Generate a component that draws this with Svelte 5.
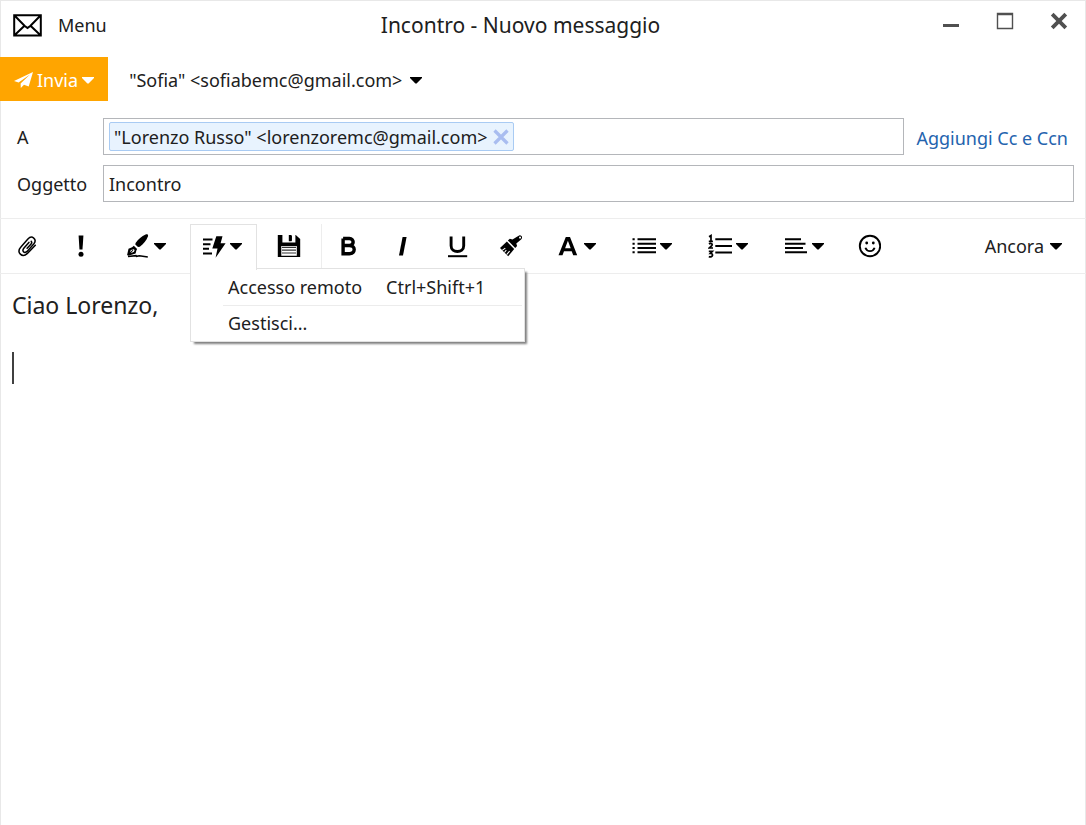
<script lang="ts">
  let subject = $state('Incontro');
  let menuOpen = $state(true);
  let chipShown = $state(true);
</script>

{#snippet caret()}
  <svg class="caret" viewBox="0 0 12 7" aria-hidden="true"><path d="M0 0h12v1L6.6 6.6h-1.2L0 1z" /></svg>
{/snippet}

<main class="window">
  <header class="titlebar">
    <button class="menu-button">
      <svg class="mail" viewBox="0 0 29 23" aria-hidden="true">
        <path d="M1.2 1.2h26.6v20.2H1.2zM1.5 1.5l10 10.2 3 2.3 3-2.3 10-10.2M1.5 21.2l10-9.5M27.5 21.2l-10-9.5" />
      </svg>
      <span>Menu</span>
    </button>
    <h1>Incontro - Nuovo messaggio</h1>
    <div class="controls">
      <button aria-label="Riduci a icona">
        <svg viewBox="0 0 18 18"><path d="M1 13.5h16" stroke-width="3" /></svg>
      </button>
      <button aria-label="Ingrandisci">
        <svg viewBox="0 0 18 18"><path d="M1.5 1.5h15v15h-15zM1 2.5h16" stroke-width="1.4" /></svg>
      </button>
      <button aria-label="Chiudi">
        <svg viewBox="0 0 18 18"><path d="M2.2 2.2l13.6 13.6M15.8 2.2L2.2 15.8" stroke-width="3.8" /></svg>
      </button>
    </div>
  </header>

  <div class="send-row">
    <button class="send">
      <svg class="plane" viewBox="0 0 19 16" aria-hidden="true">
        <path d="M19 0L0 9l4.6 1.6L16 2.5 6.6 11.4 6.8 16l3.2-3.2 4.7 1.7z" />
      </svg>
      <span>Invia</span>
      {@render caret()}
    </button>
    <button class="from">
      <span>"Sofia" &lt;sofiabemc@gmail.com&gt;</span>
      {@render caret()}
    </button>
  </div>

  <div class="fields">
    <div class="field">
      <label for="to">A</label>
      <div class="box">
        {#if chipShown}
          <span class="chip">
            <span>"Lorenzo Russo" &lt;lorenzoremc@gmail.com&gt;</span>
            <button aria-label="Rimuovi" onclick={() => (chipShown = false)}>
              <svg viewBox="0 0 16 16"><path d="M1.5 1.5l13 13M14.5 1.5l-13 13" /></svg>
            </button>
          </span>
        {/if}
        <input id="to" type="text" />
      </div>
      <a href="#cc">Aggiungi Cc e Ccn</a>
    </div>
    <div class="field">
      <label for="subject">Oggetto</label>
      <div class="box"><input id="subject" type="text" bind:value={subject} /></div>
    </div>
  </div>

  <div class="toolbar" role="toolbar">
    <button class="tool" aria-label="Allega">
      <svg class="icon" viewBox="0 0 24 24" fill="none" stroke="#000" stroke-width="1.5" stroke-linecap="round">
        <path d="M20.3 11.2l-7.9 8.2c-5.3 5.1-11.3-1-6.5-6.3l7-8.2c4.1-4.2 9.4.3 6 4.9l-6.8 7.6c-3 2.7-5.6-.5-3.1-3.4l4.9-5.6" />
        <path d="M16.2 7.2c1.1 1.2.6 2-.3 3l-3.8 4.1" />
      </svg>
    </button>
    <button class="tool" aria-label="Priorità alta">
      <svg class="icon" viewBox="0 0 24 24"><path d="M9.6 1.5h4.8l-.9 14h-3z" /><circle cx="12" cy="20.3" r="2.5" /></svg>
    </button>
    <button class="tool drop" aria-label="Firma">
      <svg class="icon" viewBox="0 0 24 24">
        <path d="M19.6.6c1.6-.8 3 .2 2.3 1.9-1.6 4.1-4.2 7.3-8.1 10.2l-1.8.3-2.7-2.6.3-1.5C12.3 5.4 15.6 2.4 19.6.6z" />
        <path fill-rule="evenodd" d="M7.8 11.8l3.3 3.3-.8 1.6-.7 2.9-7.3 2.2-1.2-.8 1.4-6.3 3.6-1.4zM3.8 18.6l3-2.9.5.6-2.5 2.9 3.2-1.4.6-1.8-.9-.8-2.8.9z" />
        <path d="M2 22.5l8-.9.6.8 2.8-.7 8.4 1.3" fill="none" stroke="#000" stroke-width="1.6" />
      </svg>
      {@render caret()}
    </button>

    <div class="quick">
      <button class="tab" aria-label="Testo rapido" aria-expanded={menuOpen} onclick={() => (menuOpen = !menuOpen)}>
        <svg class="icon" viewBox="0 0 24 24">
          <path d="M1 4.5h9.5M1 9.3h7.5M1 13.8h6M1 18.6h9" stroke="#000" stroke-width="2" />
          <path d="M14.3 1.2h6.2l-1.9 7h5L13.6 22.8l1.9-9.4h-5.2z" />
        </svg>
        {@render caret()}
      </button>
      {#if menuOpen}
        <div class="menu" role="menu">
          <button role="menuitem"><span>Accesso remoto</span><kbd>Ctrl+Shift+1</kbd></button>
          <button role="menuitem">Gestisci...</button>
        </div>
      {/if}
    </div>

    <button class="tool save" aria-label="Salva">
      <svg class="icon" viewBox="0 0 24 24">
        <path fill-rule="evenodd" d="M.8 1h18l4.4 4v18H.8zM5.4 1v7.5h13V1h-1.2v0h-2.7v6.3h-2.7V1zM4.3 12v9.7h15.5V12z" />
        <path d="M5 13.3h14M5 16.2h14M5 19h14" stroke="#333" stroke-width="1.2" />
        <path d="M12.2 1.8h2.7v5h-2.7z" />
      </svg>
    </button>

    <button class="tool" aria-label="Grassetto">
      <svg class="icon" viewBox="0 0 24 24" fill="none" stroke="#000" stroke-width="3.4">
        <path d="M6.1 4.5h6.3c5 0 5 7 0 7H6.1M12.4 11.5c6.4 0 6.4 8.2 0 8.2H6.1V4.5" />
      </svg>
    </button>
    <button class="tool" aria-label="Corsivo">
      <svg class="icon" viewBox="0 0 24 24"><path d="M11.6 3h4L12 21.5H8z" /></svg>
    </button>
    <button class="tool" aria-label="Sottolineato">
      <svg class="icon" viewBox="0 0 24 24" fill="none" stroke="#000">
        <path d="M6.1 2.5v9.2c0 7.8 12.6 7.8 12.6 0V2.5" stroke-width="2.9" /><path d="M3 22.2h19.2" stroke-width="2" />
      </svg>
    </button>
    <button class="tool" aria-label="Copia formato">
      <svg class="icon" viewBox="0 0 24 24">
        <path fill-rule="evenodd" d="M20.6 1.3c2.6-.1 3.2 2.8 1.5 4.1l-4.8 4.2.8 2.5-1.9 1.8-7.3-7.4 1.9-1.7 2.7.8 4.5-2.9zM21 2.6a1 1 0 1 0 .1 2 1 1 0 0 0-.1-2z" />
        <path d="M7.9 7.6l7.3 7.4-6 7.3L1 14.1z" />
        <path d="M3.2 16.4l3.1-2.3M5.4 18.5l1.9-2.4M7.6 20.6l3-3.5" stroke="#fff" stroke-width="1.1" />
      </svg>
    </button>
    <button class="tool drop" aria-label="Colore testo">
      <svg class="icon" viewBox="0 0 24 24"><path fill-rule="evenodd" d="M9.8 3h4.2l7.2 18.3h-4l-1.5-4H8l-1.5 4h-4zM11.9 6.8l-2.8 7.5h5.6z" /></svg>
      {@render caret()}
    </button>
    <button class="tool drop" aria-label="Elenco puntato">
      <svg class="icon" viewBox="0 0 24 24" stroke="#000" stroke-width="2">
        <path d="M5.5 5.3H24M5.5 9.7H24M5.5 14H24M5.5 18.3H24" /><path d="M.5 5.3h2.2M.5 9.7h2.2M.5 14h2.2M.5 18.3h2.2" />
      </svg>
      {@render caret()}
    </button>
    <button class="tool drop" aria-label="Elenco numerato">
      <svg class="icon" viewBox="0 0 24 24" fill="none" stroke="#000" stroke-width="2">
        <path d="M7.3 5.3H24M7.3 12H24M7.3 18.5H24" />
        <path d="M1 2.8l2-1.2v5.8M.8 7.4h4.1M1 10.2c1.8-1.6 4.2-.1 2.7 1.5L1.2 14H5M.8 17.3h3.6l-2 2.1c3.2-.1 2.8 4.5-1.6 3.2" stroke-width="1.7" />
      </svg>
      {@render caret()}
    </button>
    <button class="tool drop" aria-label="Allineamento">
      <svg class="icon" viewBox="0 0 24 24" stroke="#000" stroke-width="2">
        <path d="M1 5.3h16M1 9.7h20.5M1 14h18M1 18.3h22" />
      </svg>
      {@render caret()}
    </button>
    <button class="tool" aria-label="Emoticon">
      <svg class="icon" viewBox="0 0 24 24" fill="none" stroke="#000" stroke-width="1.9">
        <circle cx="13" cy="12" r="10.2" /><path d="M8.4 13.8c1.6 4.4 7.6 4.4 9.2 0" />
        <circle cx="9.7" cy="9" r="1.4" fill="#000" stroke="none" /><circle cx="16.3" cy="9" r="1.4" fill="#000" stroke="none" />
      </svg>
    </button>

    <button class="more"><span>Ancora</span>{@render caret()}</button>
  </div>

  <div class="editor" role="textbox" aria-multiline="true" aria-label="Messaggio" tabindex="0" contenteditable="true">
    <p>Ciao Lorenzo,</p>
    <p><span class="cursor"></span></p>
  </div>
</main>

<style>
  :global(body) {
    margin: 0;
    background: #fff;
  }
  * {
    box-sizing: border-box;
  }
  .window {
    display: flex;
    flex-direction: column;
    min-height: 100vh;
    border-top: 1px solid #e8e8e8;
    box-shadow: inset 1px 0 #e8e8e8, inset -1px 0 #e8e8e8;
    color: #202020;
    font-family: 'Noto Sans', 'Open Sans', sans-serif;
    font-size: 18px;
    line-height: 24px;
  }
  button,
  input {
    margin: 0;
    padding: 0;
    border: 0;
    background: none;
    color: inherit;
    font: inherit;
  }
  svg {
    display: block;
    flex: none;
  }
  .caret {
    width: 12px;
    height: 7px;
    fill: currentColor;
  }
  .titlebar {
    display: grid;
    grid-template-columns: 1fr auto 1fr;
    align-items: center;
    height: 56px;
    padding: 0 18px 8px 13px;
  }
  .menu-button {
    display: flex;
    align-items: center;
    gap: 16px;
    justify-self: start;
  }
  .mail {
    width: 29px;
    height: 23px;
    fill: none;
    stroke: #000;
    stroke-width: 2;
  }
  h1 {
    margin: 0;
    padding-right: 40px;
    font-size: 21px;
    font-weight: 400;
    line-height: 28px;
  }
  .controls {
    display: flex;
    gap: 36px;
    justify-self: end;
    padding-bottom: 8px;
  }
  .controls svg {
    width: 18px;
    height: 18px;
    fill: none;
    stroke: #505050;
  }
  .send-row {
    display: flex;
    height: 44px;
    gap: 21px;
  }
  .send,
  .from {
    display: flex;
    align-items: center;
    padding-top: 2px;
  }
  .send {
    gap: 4px;
    padding-right: 14px;
    padding-left: 14px;
    background: #ffa500;
    color: #fff;
  }
  .plane {
    width: 19px;
    height: 16px;
    fill: #fff;
  }
  .from {
    gap: 8px;
  }
  .from .caret,
  .toolbar .caret {
    color: #000;
  }
  .fields {
    display: flex;
    flex-direction: column;
    gap: 10px;
    padding: 17px 12px 16px 17px;
  }
  .field {
    display: flex;
    align-items: center;
  }
  label {
    flex: none;
    width: 86px;
  }
  .box {
    display: flex;
    flex: 1;
    align-items: center;
    min-width: 0;
    height: 37px;
    padding: 0 5px;
    border: 1px solid #b4b6ba;
  }
  .box input {
    flex: 1;
    min-width: 0;
    outline: 0;
  }
  .chip {
    display: flex;
    align-items: center;
    gap: 5px;
    height: 29px;
    padding: 0 4px;
    border: 1px solid #a9cbf3;
    border-radius: 2px;
    background: #e8f3fe;
    white-space: nowrap;
  }
  .chip svg {
    width: 16px;
    height: 16px;
    stroke: #a9bdf0;
    stroke-width: 3.2;
  }
  .field a {
    flex: none;
    padding: 2px 6px 0 12px;
    color: #2463ae;
    text-decoration: none;
  }
  .toolbar {
    display: flex;
    height: 56px;
    border-top: 1px solid #ededed;
    border-bottom: 1px solid #ededed;
  }
  .tool,
  .tab,
  .more {
    display: flex;
    flex: none;
    align-items: center;
    justify-content: center;
    gap: 4px;
  }
  .tool {
    width: 54px;
  }
  .drop {
    width: 76px;
  }
  .icon {
    width: 24px;
    height: 24px;
  }
  .quick {
    position: relative;
    display: flex;
    margin: 5px 0 0 6px;
  }
  .tab {
    position: relative;
    z-index: 2;
    width: 67px;
    height: 46px;
    padding: 0 3px 2px 0;
    border: 1px solid #e2e2e2;
    border-bottom: 0;
    background: #fff;
  }
  .menu {
    position: absolute;
    z-index: 1;
    top: 44px;
    left: 0;
    width: max-content;
    padding-right: 2px;
    border: 1px solid #e2e2e2;
    background: #fff;
    box-shadow: 3px 3px 2px -1px #808080;
  }
  .menu button {
    display: flex;
    gap: 24px;
    width: 100%;
    padding: 6px 37px 6px 37px;
    white-space: nowrap;
  }
  .menu button + button {
    background: linear-gradient(#ececec, #ececec) 32px 0 / 100% 1px no-repeat;
  }
  kbd {
    font: inherit;
  }
  .save {
    width: 65px;
    margin-top: 5px;
    padding-bottom: 5px;
    border-right: 1px solid #ededed;
  }
  .more {
    gap: 6px;
    margin-left: auto;
    padding-right: 24px;
  }
  .editor {
    flex: 1;
    padding: 15px 12px;
    outline: 0;
    font-size: 23px;
    line-height: 32px;
  }
  .editor p {
    min-height: 32px;
    margin: 0 0 31px;
  }
  .cursor {
    display: block;
    width: 2px;
    height: 32px;
    background: #404040;
  }
</style>
